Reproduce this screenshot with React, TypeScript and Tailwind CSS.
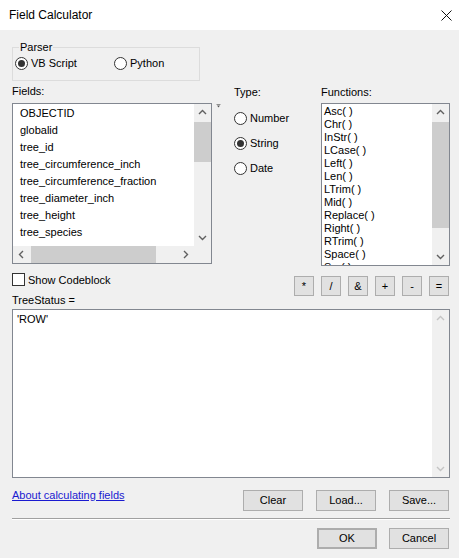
import React from 'react';

const fields = [
  'OBJECTID',
  'globalid',
  'tree_id',
  'tree_circumference_inch',
  'tree_circumference_fraction',
  'tree_diameter_inch',
  'tree_height',
  'tree_species',
];

const funcs = [
  'Asc( )',
  'Chr( )',
  'InStr( )',
  'LCase( )',
  'Left( )',
  'Len( )',
  'LTrim( )',
  'Mid( )',
  'Replace( )',
  'Right( )',
  'RTrim( )',
  'Space( )',
  'Sqr( )',
];

const ops = ['*', '/', '&', '+', '-', '='];

function Chevron({ dir, disabled }: { dir: 'up' | 'down' | 'left' | 'right'; disabled?: boolean }) {
  const pts = {
    up: '1,6 4.5,2.5 8,6',
    down: '1,3 4.5,6.5 8,3',
    left: '6,1 2.5,4.5 6,8',
    right: '3,1 6.5,4.5 3,8',
  }[dir];
  return (
    <svg width="9" height="9" viewBox="0 0 9 9">
      <polyline points={pts} fill="none" stroke={disabled ? '#c4c4c4' : '#606060'} strokeWidth="1.4" />
    </svg>
  );
}

function VScroll({ thumb, disabled }: { thumb?: string; disabled?: boolean }) {
  return (
    <div className="w-[17px] h-full bg-[#f0f0f0] flex flex-col shrink-0">
      <div className="h-[17px] flex items-center justify-center">
        <Chevron dir="up" disabled={disabled} />
      </div>
      <div className="flex-1">{thumb && <div className={`bg-[#cdcdcd] ${thumb}`} />}</div>
      <div className="h-[17px] flex items-center justify-center">
        <Chevron dir="down" disabled={disabled} />
      </div>
    </div>
  );
}

function Radio({ checked, label, width }: { checked?: boolean; label: string; width?: string }) {
  return (
    <div className={`flex items-center h-[14px] ${width || ''}`}>
      <span className="w-[13px] h-[13px] rounded-full border border-[#333] bg-white flex items-center justify-center shrink-0">
        {checked && <span className="w-[7px] h-[7px] rounded-full bg-[#333]" />}
      </span>
      <span className="ml-[3px] leading-[14px]">{label}</span>
    </div>
  );
}

function Btn({ children, className }: { children: React.ReactNode; className?: string }) {
  return (
    <div
      className={`flex items-center justify-center bg-[#e1e1e1] border border-[#adadad] leading-none ${className || ''}`}
    >
      {children}
    </div>
  );
}

export default function App() {
  return (
    <div className="w-[459px] h-[558px] bg-[#f0f0f0] overflow-hidden text-[11px] text-black font-['Liberation_Sans',Arial,sans-serif]">
      {/* title bar */}
      <div className="h-[30px] bg-white flex items-center justify-between pl-[9px] pr-[7px]">
        <span className="text-[12px]">Field Calculator</span>
        <svg width="11" height="11" viewBox="0 0 11 11">
          <path d="M0.5 0.5 L10.5 10.5 M10.5 0.5 L0.5 10.5" stroke="#111" strokeWidth="1" />
        </svg>
      </div>

      <div className="flex flex-col pl-[12px] pr-[9px]">
        {/* parser */}
        <fieldset className="mt-[10px] w-[188px] border border-[#dcdcdc] px-[2px] pb-[10px]">
          <legend className="ml-[4px] px-[1px] leading-[14px]">Parser</legend>
          <div className="flex mt-[2px]">
            <Radio checked label="VB Script" width="w-[99px]" />
            <Radio label="Python" />
          </div>
        </fieldset>

        {/* lists */}
        <div className="flex mt-[3px]">
          <div className="w-[200px] flex flex-col">
            <div className="leading-[14px] h-[14px]">Fields:</div>
            <div className="mt-[5px] h-[161px] border border-[#828790] bg-white flex flex-col">
              <div className="flex flex-1 min-h-0">
                <div className="flex-1 overflow-hidden pl-[7px] pt-[1px]">
                  {fields.map((f) => (
                    <div key={f} className="h-[17px] leading-[17px] whitespace-nowrap">
                      {f}
                    </div>
                  ))}
                </div>
                <VScroll thumb="mt-[1px] h-[40px]" />
              </div>
              <div className="h-[17px] flex shrink-0">
                <div className="flex-1 bg-[#f0f0f0] flex items-center">
                  <div className="w-[17px] h-full flex items-center justify-center">
                    <Chevron dir="left" />
                  </div>
                  <div className="flex-1 h-full">
                    <div className="ml-[1px] w-[125px] h-full bg-[#cdcdcd]" />
                  </div>
                  <div className="w-[17px] h-full flex items-center justify-center">
                    <Chevron dir="right" />
                  </div>
                </div>
                <div className="w-[17px] bg-[#f0f0f0]" />
              </div>
            </div>
          </div>

          <div className="w-[22px] pt-[20px] pl-[4px]">
            <svg width="5" height="4" viewBox="0 0 5 4">
              <path d="M0.5 0.5 H4.5" stroke="#777" strokeWidth="0.8" />
              <path d="M1 1.6 H4 L2.5 3.4 Z" fill="#555" />
            </svg>
          </div>

          <div className="w-[87px] flex flex-col">
            <div className="leading-[14px] h-[14px] mt-[1px]">Type:</div>
            <div className="mt-[12px] flex flex-col gap-[11px]">
              <Radio label="Number" />
              <Radio checked label="String" />
              <Radio label="Date" />
            </div>
          </div>

          <div className="w-[129px] flex flex-col">
            <div className="leading-[14px] h-[14px] mt-[1px]">Functions:</div>
            <div className="mt-[4px] h-[163px] border border-[#828790] bg-white flex">
              <div className="flex-1 overflow-hidden pl-[2px] pt-[1px]">
                {funcs.map((f) => (
                  <div key={f} className="h-[13px] leading-[13px] whitespace-nowrap">
                    {f}
                  </div>
                ))}
              </div>
              <VScroll thumb="mt-[1px] h-[106px]" />
            </div>
          </div>
        </div>

        {/* codeblock + operators */}
        <div className="flex justify-between h-[41px]">
          <div className="flex flex-col pt-[7px]">
            <div className="flex items-center h-[13px]">
              <span className="w-[13px] h-[13px] border border-[#333] bg-white" />
              <span className="ml-[3px] leading-[14px]">Show Codeblock</span>
            </div>
            <div className="mt-[7px] leading-[14px]">TreeStatus =</div>
          </div>
          <div className="flex gap-[7px] pt-[10px] pr-[1px]">
            {ops.map((o) => (
              <Btn key={o} className="w-[20px] h-[20px]">
                {o}
              </Btn>
            ))}
          </div>
        </div>

        {/* expression */}
        <div className="mt-[2px] h-[169px] border border-[#828790] bg-white flex">
          <div className="flex-1 pl-[4px] pt-[2px] leading-[14px]">'ROW'</div>
          <VScroll disabled />
        </div>

        {/* link + buttons */}
        <div className="mt-[10px] flex justify-between items-start">
          <span className="leading-[14px] text-[#1a1ad0] underline">About calculating fields</span>
          <div className="mt-[2px] flex gap-[13px] pr-[1px]">
            <Btn className="w-[60px] h-[21px]">Clear</Btn>
            <Btn className="w-[60px] h-[21px]">Load...</Btn>
            <Btn className="w-[60px] h-[21px]">Save...</Btn>
          </div>
        </div>

        <div className="mt-[7px] border-t border-[#a0a0a0] border-b border-b-white" />

        <div className="mt-[8px] flex justify-end gap-[12px] pr-[1px]">
          <Btn className="w-[60px] h-[21px] border-2 border-[#0078d7]">OK</Btn>
          <Btn className="w-[60px] h-[21px]">Cancel</Btn>
        </div>
      </div>
    </div>
  );
}
